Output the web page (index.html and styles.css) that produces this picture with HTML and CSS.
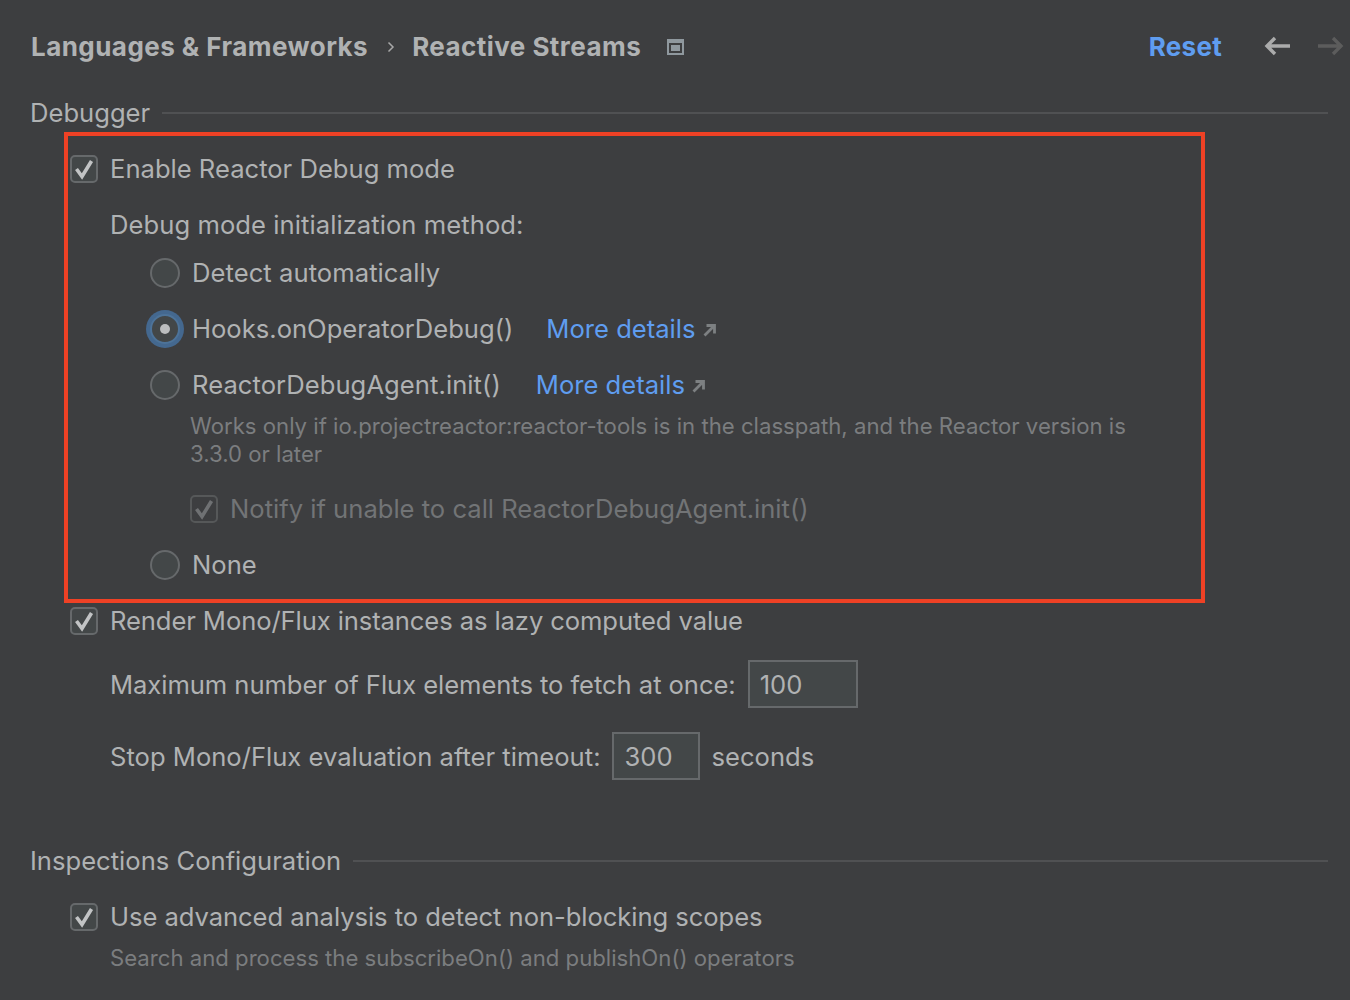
FILE: index.html
```html
<!DOCTYPE html>
<html lang="en">
<head>
<meta charset="utf-8">
<title>Reactive Streams</title>
<link rel="stylesheet" href="styles.css">
</head>
<body>
<main class="page">
  <header class="header">
    <span class="crumb">Languages &amp; Frameworks</span>
    <svg class="chev" width="10" height="14" viewBox="0 0 10 14"><path d="M2.500 2.500 7 7l-4.500 4.500" fill="none" stroke="#a8a8a8" stroke-width="1.500"/></svg>
    <span class="crumb">Reactive Streams</span>
    <svg class="scope" width="17" height="16" viewBox="0 0 17 16"><path fill="#8f989e" fill-rule="evenodd" d="M0 0h17v16H0zM2 4v10h13V4z"/><rect x="4" y="6" width="9" height="6" fill="#8f989e"/></svg>
    <a class="reset">Reset</a>
    <svg class="nav" width="28" height="20" viewBox="0 0 28 20"><path d="M27 10H4M12 2 4 10l8 8" fill="none" stroke="#ababab" stroke-width="3.400"/></svg>
    <svg class="nav nav-next" width="28" height="20" viewBox="0 0 28 20"><path d="M1 10h23M16 2l8 8-8 8" fill="none" stroke="#5c5c5c" stroke-width="3.400"/></svg>
  </header>

  <section class="section">
    <div class="group-title"><span class="label">Debugger</span><i class="rule"></i></div>
    <div class="row row-check"><span class="check"><svg viewBox="0 0 24 24"><path d="M4.500 12l5.500 7.500L19.500 4" /></svg></span><span class="label">Enable Reactor Debug mode</span></div>
    <div class="row row-sub"><span class="label loose">Debug mode initialization method:</span></div>
    <div class="row row-radio"><span class="radio"></span><span class="label loose">Detect automatically</span></div>
    <div class="row row-radio"><span class="radio on"></span><span class="label">Hooks.onOperatorDebug()</span><a class="label link link-a">More details</a><svg class="ext" width="13" height="13" viewBox="0 0 13 13"><path d="M1.500 11.500 10.500 2.500M3.500 1.500h8v8" fill="none" stroke="#7d8082" stroke-width="2.800"/></svg></div>
    <div class="row row-radio"><span class="radio"></span><span class="label loose">ReactorDebugAgent.init()</span><a class="label link link-b">More details</a><svg class="ext" width="13" height="13" viewBox="0 0 13 13"><path d="M1.500 11.500 10.500 2.500M3.500 1.500h8v8" fill="none" stroke="#7d8082" stroke-width="2.800"/></svg></div>
    <p class="hint hint-radio">Works only if io.projectreactor:reactor-tools is in the classpath, and the Reactor version is<br>3.3.0 or later</p>
    <div class="row row-notify"><span class="check check-off"><svg viewBox="0 0 24 24"><path d="M4.500 12l5.500 7.500L19.500 4" /></svg></span><span class="label">Notify if unable to call ReactorDebugAgent.init()</span></div>
    <div class="row row-radio"><span class="radio"></span><span class="label">None</span></div>
    <div class="row row-check"><span class="check"><svg viewBox="0 0 24 24"><path d="M4.500 12l5.500 7.500L19.500 4" /></svg></span><span class="label tighter">Render Mono/Flux instances as lazy computed value</span></div>
    <div class="row row-field"><span class="label tight">Maximum number of Flux elements to fetch at once:</span><span class="field field-a">100</span></div>
    <div class="row row-field"><span class="label">Stop Mono/Flux evaluation after timeout:</span><span class="field field-b">300</span><span class="label">seconds</span></div>
  </section>

  <section class="section section-two">
    <div class="group-title"><span class="label">Inspections Configuration</span><i class="rule"></i></div>
    <div class="row row-check"><span class="check"><svg viewBox="0 0 24 24"><path d="M4.500 12l5.500 7.500L19.500 4" /></svg></span><span class="label tight">Use advanced analysis to detect non-blocking scopes</span></div>
    <p class="hint hint-check">Search and process the subscribeOn() and publishOn() operators</p>
  </section>

  <div class="highlight"></div>
</main>
</body>
</html>
```

FILE: styles.css
```css
* { box-sizing: border-box; }
html, body { margin: 0; height: 100%; }
body {
  background: #3d3e40;
  color: #b0b2b3;
  font-family: Inter, "Liberation Sans", sans-serif;
  font-size: 25.600px;
  overflow: hidden;
}
.page { position: relative; height: 1000px; padding: 0 22px 0 30px; }
.header { display: flex; align-items: center; height: 94px; }
.crumb { font-weight: 700; font-size: 26px; letter-spacing: 0.450px; color: #b0b2b3; padding-bottom: 2px; }
.crumb:first-child { padding-left: 1px; }
.chev { margin: 0 16px 0 18px; }
.scope { margin-left: 26px; }
.reset { margin-left: auto; margin-right: 41px; font-weight: 700; font-size: 26px; letter-spacing: 0.300px; color: #5f9df0; padding-bottom: 2px; }
.nav { margin-top: -2px; }
.nav-next { margin-left: 26px; margin-right: -17px; }
.label { padding-bottom: 2px; }
.loose { letter-spacing: 0.060px; }
.tight { letter-spacing: -0.060px; }
.tighter { letter-spacing: -0.100px; }
.group-title { display: flex; align-items: center; height: 38px; margin-bottom: 9px; }
.rule { flex: 1; height: 2px; background: #505153; margin-left: 12px; }
.row { display: flex; align-items: center; height: 56px; }
.row-check { padding-left: 40px; gap: 12px; }
.row-sub { padding-left: 80px; height: 40px; margin-top: 8px; }
.row-radio { padding-left: 120px; gap: 12px; }
.link { color: #5f9df0; }
.link-a { margin-left: 21px; }
.link-b { margin-left: 23px; }
.ext { margin: 2px 0 0 -5px; }
.check {
  width: 28px; height: 28px; flex: none; display: block;
  border: 2px solid #66696b; border-radius: 5px; background: #434748;
}
.check svg { display: block; width: 24px; height: 24px; }
.check path { fill: none; stroke: #c2c4c5; stroke-width: 3.600; }
.check-off { border-color: #565859; background: transparent; }
.check-off path { stroke: #6f7173; }
.radio {
  width: 30px; height: 30px; flex: none; border-radius: 50%;
  border: 2px solid #66696b; background: #434748; position: relative;
}
.radio.on {
  border-color: #4d7399;
  box-shadow: 0 0 0 4px #44688f;
}
.radio.on::after {
  content: ""; position: absolute; left: 8px; top: 8px; width: 10px; height: 10px;
  border-radius: 50%; background: #bcbebf;
}
.hint { margin: 0; font-size: 22.170px; line-height: 28px; color: #7b7d7f; }
.hint-radio { padding-left: 160px; margin-top: -1px; }
.hint-check { padding-left: 80px; margin-top: -1px; }
.row-notify { padding-left: 160px; gap: 12px; color: #727476; margin-top: 13px; }
.row-field { padding-left: 80px; height: 72px; }
.field {
  height: 48px; display: flex; align-items: center; padding-left: 10px;
  border: 2px solid #66696b; background: #434748; margin-bottom: 2px;
}
.field-a { width: 110px; margin-left: 12px; }
.field-b { width: 88px; margin-left: 11px; margin-right: 12px; padding-left: 11px; }
.section-two { margin-top: 49px; }
.highlight {
  position: absolute; left: 64px; top: 132px; width: 1141px; height: 471px;
  border: 4px solid #ef4125; pointer-events: none;
}
```
